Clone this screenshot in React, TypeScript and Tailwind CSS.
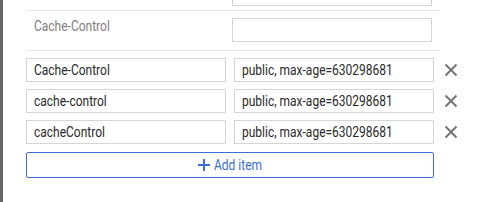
import React from 'react';

const rows = [
  { key: 'Cache-Control', value: 'public, max-age=630298681' },
  { key: 'cache-control', value: 'public, max-age=630298681' },
  { key: 'cacheControl', value: 'public, max-age=630298681' },
];

// text in this panel is narrow and tall, so squeeze it horizontally
const Txt: React.FC<{ children: React.ReactNode; className?: string }> = ({ children, className = '' }) => (
  <span className={`block whitespace-nowrap origin-left scale-x-[0.8] text-[15px] leading-none ${className}`}>{children}</span>
);

const Field: React.FC<{ value?: string; className?: string }> = ({ value, className = '' }) => (
  <div className={`w-[200px] h-[24px] border border-[#d6d6d6] px-[7px] flex items-center overflow-hidden text-[#2a2a2a] ${className}`}>
    {value && <Txt>{value}</Txt>}
  </div>
);

const CloseIcon: React.FC = () => (
  <svg width="14" height="14" viewBox="0 0 14 14" className="text-[#757575]">
    <path d="M1.5 1.5 L12.5 12.5 M12.5 1.5 L1.5 12.5" stroke="currentColor" strokeWidth="2" fill="none" />
  </svg>
);

const App: React.FC = () => {
  return (
    <div className="w-[481px] h-[202px] bg-white overflow-hidden font-['Roboto','Liberation_Sans',sans-serif] text-[13px]">
      <div className="h-full border-l-[3px] border-[#666666] pl-[23px]">
        <div className="w-[414px]">
          {/* tail of the previous field */}
          <div className="h-[6px] flex">
            <div className="ml-[206px] w-[200px] h-[6px] border-x border-b border-[#d6d6d6]" />
          </div>
          <div className="mt-[4px] border-t border-[#e6e6e6]" />

          {/* read-only header row */}
          <div className="flex items-center pt-[7px] pb-[8px]">
            <div className="w-[206px] pl-[8px] text-[#808080] -mt-[7px]">
              <Txt>Cache-Control</Txt>
            </div>
            <Field />
          </div>
          <div className="border-t border-[#e6e6e6]" />
        </div>

        <div className="pt-[7px] flex flex-col gap-[7px]">
          {rows.map((r, i) => (
            <div key={i} className="flex items-center">
              <Field value={r.key} />
              <Field value={r.value} className="ml-[8px]" />
              <button className="ml-[10px] w-[14px] h-[14px] flex items-center justify-center">
                <CloseIcon />
              </button>
            </div>
          ))}
        </div>

        <button className="mt-[8px] w-[408px] h-[26px] border border-[#3b6fd6] rounded-[2px] flex items-center justify-center text-[#3b6fd6]">
          <svg width="12" height="12" viewBox="0 0 12 12">
            <path d="M6 0 V12 M0 6 H12" stroke="#3b6fd6" strokeWidth="2" />
          </svg>
          <span className="ml-[4px] w-[48px]">
            <Txt>Add item</Txt>
          </span>
        </button>
      </div>
    </div>
  );
};

export default App;
